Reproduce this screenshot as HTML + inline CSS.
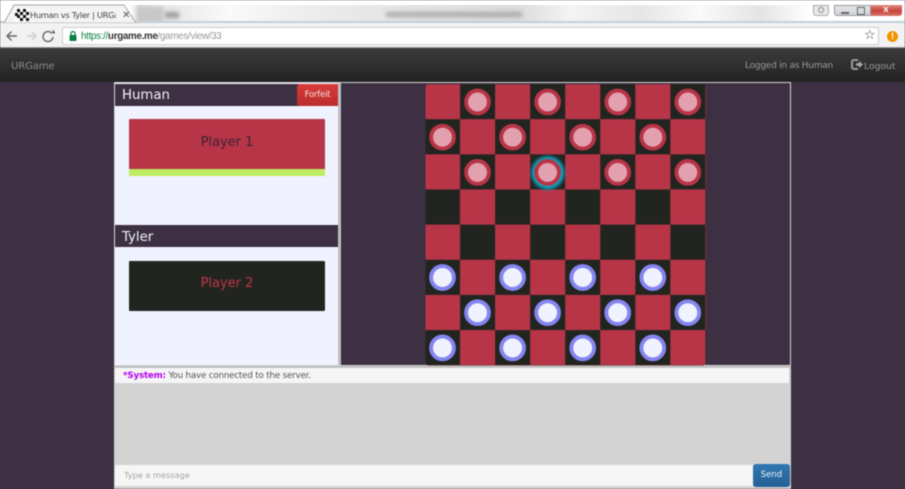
<!DOCTYPE html>
<html>
<head>
<meta charset="utf-8">
<title>Human vs Tyler | URGame</title>
<style>
html,body{margin:0;padding:0;width:905px;height:489px;overflow:hidden;background:#3d3042}
body{position:relative;font-family:"DejaVu Sans","Liberation Sans",sans-serif}
#wrap{position:absolute;left:0;top:0;width:905px;height:489px;filter:blur(.42px);overflow:hidden}
.a{position:absolute;white-space:nowrap}
</style>
</head>
<body>
<div id="wrap">
<!-- window top -->
<div class="a" style="left:0;top:0;width:905px;height:23px;background:linear-gradient(90deg,#fff 0,#fff 130px,#d8d8d8 140px,#e8e8e8 170px,#fafafa 230px,#eee 300px,#e4e4e4 400px,#dcdcdc 520px,#f4f4f4 570px,#e6e6e6 640px,#fafafa 700px,#e4e4e4 760px,#fff 810px,#fff 905px)"></div>
<div class="a" style="left:0;top:0;width:905px;height:5px;background:#fff"></div>
<div class="a" style="left:137px;top:7px;width:26px;height:15px;background:#c8c8c8;filter:blur(1.500px)"></div>
<div class="a" style="left:165px;top:12px;width:14px;height:6px;background:#999;filter:blur(2px)"></div>
<div class="a" style="left:386px;top:12px;width:136px;height:5px;background:#999;filter:blur(2px);opacity:.75"></div>
<div class="a" style="left:0;top:21px;width:905px;height:2px;background:#c4d0dc"></div>
<!-- tab -->
<svg class="a" style="left:0;top:4px" width="140" height="20"><path d="M4 19 L14 1 H124 L136 19 Z" fill="#f4f4f4" stroke="#a8a8a8" stroke-width="1"/><path d="M0 19H4M136 19H140" stroke="#bbb"/></svg>
<svg class="a" style="left:15px;top:8px" width="14" height="14"><rect width="14" height="14" fill="#fff"/><g fill="#111"><rect x="2" y="1" width="3" height="3"/><rect x="8" y="1" width="3" height="3"/><rect x="5" y="4" width="3" height="3"/><rect x="11" y="4" width="3" height="3"/><rect x="0" y="5" width="3" height="3"/><rect x="2" y="7" width="3" height="3"/><rect x="8" y="7" width="3" height="3"/><rect x="5" y="10" width="3" height="3"/><rect x="11" y="10" width="3" height="3"/></g></svg>
<div class="a" style="left:30px;top:10px;font:8.300px/11px 'DejaVu Sans',sans-serif;letter-spacing:-.3px;color:#444;width:86px;overflow:hidden">Human vs Tyler | URGame</div>
<div class="a" style="left:122px;top:10px;font:10px/11px 'DejaVu Sans',sans-serif;color:#555">✕</div>
<!-- window controls -->
<div class="a" style="left:813px;top:5px;width:16px;height:11px;border:1px solid #aaa;border-radius:0 0 3px 3px;background:#e9e9e9;box-sizing:border-box"></div>
<div class="a" style="left:818px;top:7px;width:6px;height:6px;border:1px solid #888;border-radius:50%;box-sizing:border-box"></div>
<div class="a" style="left:834px;top:5px;width:37px;height:11px;border:1px solid #999;background:linear-gradient(#e6e6e6,#cfd3d8);border-radius:0 0 0 3px;box-sizing:border-box"></div>
<div class="a" style="left:841px;top:12px;width:8px;height:2px;background:#666"></div>
<div class="a" style="left:857px;top:7px;width:6px;height:6px;border:1px solid #666"></div>
<div class="a" style="left:871px;top:5px;width:31px;height:11px;background:linear-gradient(#e08a80,#c8413a 55%,#d77a70);border-radius:0 0 3px 0"></div>
<div class="a" style="left:883px;top:5px;font:bold 9px/11px 'DejaVu Sans',sans-serif;color:#eee">x</div>
<!-- toolbar -->
<div class="a" style="left:0;top:23px;width:905px;height:24px;background:#f2f2f2"></div>
<div class="a" style="left:0;top:47px;width:905px;height:1px;background:#9a9a9a"></div>
<svg class="a" style="left:5px;top:29px" width="50" height="14" fill="none" stroke-width="1.4">
<path d="M12 7H2M6.500 2.500 2 7l4.500 4.500" stroke="#666"/>
<path d="M22 7H31M27 3l4 4-4 4" stroke="#ccc"/>
<path d="M48 4.500A5 5 0 1 0 49 8" stroke="#666" transform="translate(-1 0)"/>
<path d="M44.500 1.500V5.500H48.500Z" fill="#666" stroke="none" transform="translate(3 -1)"/>
</svg>
<div class="a" style="left:62px;top:27px;width:817px;height:18px;background:#fff;border:1px solid #cfcfcf;box-sizing:border-box;border-radius:2px"></div>
<svg class="a" style="left:69px;top:31px" width="8" height="10"><rect x="0.500" y="4" width="7" height="6" rx="1" fill="#0b8043"/><path d="M2 4.500V2.500a2 2 0 0 1 4 0v2" fill="none" stroke="#0b8043" stroke-width="1.200"/></svg>
<div class="a" style="left:81px;top:30px;font:9.800px/13px 'Liberation Sans',sans-serif;letter-spacing:-.3px;color:#999"><span style="color:#0b8043">https://</span><span style="color:#333;font-weight:bold">urgame.me</span>/games/view/33</div>
<div class="a" style="left:864px;top:28px;font:13px/16px 'DejaVu Sans',sans-serif;color:#444">☆</div>
<div class="a" style="left:887px;top:31px;width:11px;height:11px;border-radius:50%;background:#f09300;color:#fff;font:bold 9px/11px 'Liberation Sans',sans-serif;text-align:center">!</div>
<!-- navbar -->
<div class="a" style="left:0;top:48px;width:905px;height:34px;background:linear-gradient(#3c3c3c,#222)"></div>
<div class="a" style="left:11px;top:60px;font:10px/14px 'DejaVu Sans',sans-serif;letter-spacing:-.1px;color:#8c8c8c">URGame</div>
<div class="a" style="left:745px;top:60px;font:9px/13px 'DejaVu Sans',sans-serif;letter-spacing:-.25px;color:#999">Logged in as Human</div>
<svg class="a" style="left:851px;top:59px" width="13" height="12"><path d="M7 1H3Q1 1 1 3V8Q1 10 3 10H7" fill="none" stroke="#aaa" stroke-width="1.700"/><path d="M5 4.200H8V2L12 5.500 8 9V6.800H5Z" fill="#aaa"/></svg>
<div class="a" style="left:864px;top:60px;font:9.200px/13px 'DejaVu Sans',sans-serif;color:#999">Logout</div>
<!-- main frame -->
<div class="a" style="left:114px;top:82px;width:677px;height:284px;background:#3d3042;border:1px solid #d8d8d8;box-sizing:border-box"></div>
<div class="a" style="left:115px;top:83px;width:223px;height:282px;background:#f0f2ff"></div>
<div class="a" style="left:338px;top:83px;width:3px;height:282px;background:#c0c0c4"></div>
<!-- human header -->
<div class="a" style="left:115px;top:84px;width:223px;height:22px;background:#3d3042"></div>
<div class="a" style="left:122px;top:87px;font:13.300px/18px 'DejaVu Sans',sans-serif;color:#f0f2ff">Human</div>
<div class="a" style="left:297px;top:84px;width:41px;height:22px;background:linear-gradient(#d93a3a,#bb2d2d);border-radius:3px 0 0 3px;color:#f4dede;font:8.500px/22px 'DejaVu Sans',sans-serif;letter-spacing:-.2px;text-align:center">Forfeit</div>
<!-- player 1 -->
<div class="a" style="left:128.500px;top:119px;width:196.500px;height:57px;background:#b83548;border-radius:1px"></div>
<div class="a" style="left:128.500px;top:169px;width:196.500px;height:7px;background:#bdec60;border-radius:0 0 1px 1px"></div>
<div class="a" style="left:128.500px;top:134px;width:197px;text-align:center;font:13px/17px 'DejaVu Sans',sans-serif;color:#3a2530">Player 1</div>
<!-- tyler -->
<div class="a" style="left:115px;top:225px;width:223px;height:22px;background:#3d3042"></div>
<div class="a" style="left:122px;top:229px;font:13.300px/18px 'DejaVu Sans',sans-serif;color:#f0f2ff">Tyler</div>
<div class="a" style="left:128.500px;top:260.500px;width:196.500px;height:50.500px;background:#22251f;border-radius:1px"></div>
<div class="a" style="left:128.500px;top:275px;width:197px;text-align:center;font:13px/17px 'DejaVu Sans',sans-serif;color:#c23549">Player 2</div>
<!-- board -->
<svg class="a" style="left:425px;top:83.500px" width="281" height="282" viewBox="0 0 281 282">
<defs>
<filter id="g" x="-50%" y="-50%" width="200%" height="200%"><feGaussianBlur stdDeviation="1.500"/></filter>
<pattern id="p" width="70.100" height="70.300" patternUnits="userSpaceOnUse">
<rect width="70.100" height="70.300" fill="#b83548"/>
<rect x="35.050" width="35.050" height="35.150" fill="#22251f"/>
<rect y="35.150" width="35.050" height="35.150" fill="#22251f"/>
</pattern>
</defs>
<rect x="0.500" y="0.300" width="280.400" height="281.200" rx="3" fill="url(#p)"/>
<circle cx="122.800" cy="88.700" r="16.500" fill="#11a5c4" filter="url(#g)"/>
<g fill="#e3a1af" stroke="#b83548" stroke-width="3.900">
<circle cx="52.500" cy="18" r="11.400"/><circle cx="122.600" cy="18" r="11.400"/><circle cx="192.700" cy="18" r="11.400"/><circle cx="262.800" cy="18" r="11.400"/>
<circle cx="17.500" cy="53.200" r="11.400"/><circle cx="87.600" cy="53.200" r="11.400"/><circle cx="157.700" cy="53.200" r="11.400"/><circle cx="227.800" cy="53.200" r="11.400"/>
<circle cx="52.500" cy="88.400" r="11.400"/><circle cx="122.600" cy="88.400" r="11.400"/><circle cx="192.700" cy="88.400" r="11.400"/><circle cx="262.800" cy="88.400" r="11.400"/>
</g>
<g fill="#f0f2ff" stroke="#8585f0" stroke-width="3.900">
<circle cx="17.500" cy="193.500" r="11.400"/><circle cx="87.600" cy="193.500" r="11.400"/><circle cx="157.700" cy="193.500" r="11.400"/><circle cx="227.800" cy="193.500" r="11.400"/>
<circle cx="52.500" cy="228.700" r="11.400"/><circle cx="122.600" cy="228.700" r="11.400"/><circle cx="192.700" cy="228.700" r="11.400"/><circle cx="262.800" cy="228.700" r="11.400"/>
<circle cx="17.500" cy="263.900" r="11.400"/><circle cx="87.600" cy="263.900" r="11.400"/><circle cx="157.700" cy="263.900" r="11.400"/><circle cx="227.800" cy="263.900" r="11.400"/>
</g>
</svg>
<!-- chat -->
<div class="a" style="left:114px;top:366px;width:677px;height:123px;background:#d3d3d3"></div>
<div class="a" style="left:115px;top:368px;width:674px;height:15px;background:#f5f5f5"></div>
<div class="a" style="left:114px;top:366px;width:677px;height:2px;background:linear-gradient(#aaa,#d3d3d3)"></div>
<div class="a" style="left:123px;top:370px;font:8.700px/12px 'DejaVu Sans',sans-serif;letter-spacing:-.17px;color:#555"><b style="color:#b400f0">*System:</b> You have connected to the server.</div>
<div class="a" style="left:115px;top:465px;width:638px;height:21px;background:#f6f6f6"></div>
<div class="a" style="left:124px;top:469px;font:8.200px/13px 'DejaVu Sans',sans-serif;color:#a5a5a5">Type a message</div>
<div class="a" style="left:753px;top:464px;width:37px;height:23px;background:linear-gradient(#2f78b2,#265f92);border-radius:3px;color:#eef3f8;font:8.500px/23px 'DejaVu Sans',sans-serif;text-align:center">Send</div>
</div>
</body>
</html>
